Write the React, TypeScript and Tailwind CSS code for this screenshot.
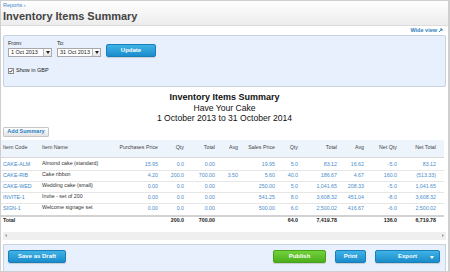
import React from 'react';

interface Row {
  code: string;
  name: string;
  vals: string[];
}

const rows: Row[] = [
  { code: 'CAKE-ALM', name: 'Almond cake (standard)', vals: ['15.95', '0.0', '0.00', '', '19.95', '5.0', '83.12', '16.62', '-5.0', '83.12'] },
  { code: 'CAKE-RIB', name: 'Cake ribbon', vals: ['4.20', '200.0', '700.00', '3.50', '5.60', '40.0', '186.67', '4.67', '160.0', '(513.33)'] },
  { code: 'CAKE-WED', name: 'Wedding cake (small)', vals: ['0.00', '0.0', '0.00', '', '250.00', '5.0', '1,041.65', '208.33', '-5.0', '1,041.65'] },
  { code: 'INVITE-1', name: 'Invite - set of 200', vals: ['0.00', '0.0', '0.00', '', '541.25', '8.0', '3,608.32', '451.04', '-8.0', '3,608.32'] },
  { code: 'SIGN-1', name: 'Welcome signage set', vals: ['0.00', '0.0', '0.00', '', '500.00', '6.0', '2,500.02', '416.67', '-6.0', '2,500.02'] },
];

const headers = ['Purchases Price', 'Qty', 'Total', 'Avg', 'Sales Price', 'Qty', 'Total', 'Avg', 'Net Qty', 'Net Total'];
const totals = ['', '200.0', '700.00', '', '', '64.0', '7,419.78', '', '136.0', '6,719.78'];

const cols = 'grid grid-cols-[41px_66px_50px_26px_31px_23px_37px_23px_39px_27px_33px_39px] pr-[7px]';

const Arrow = () => (
  <svg width="4" height="3" viewBox="0 0 4 3">
    <path d="M0 0h4L2 3z" fill="#222" />
  </svg>
);

const DateSelect = ({ value }: { value: string }) => (
  <div className="flex h-[9px] w-[44px] bg-white border border-[#a8a8a8]">
    <div className="flex-1 pl-[2px] text-[5.5px] leading-[7px] text-[#222]">{value}</div>
    <div className="w-[8px] border-l border-[#b8b8b8] bg-linear-to-b from-white to-[#e4e4e4] flex items-center justify-center">
      <Arrow />
    </div>
  </div>
);

const BlueButton = ({ label, w, caret }: { label: string; w: string; caret?: boolean }) => (
  <div className={`relative ${w} h-[13px] rounded-[2px] border border-[#1a7fb8] bg-linear-to-b from-[#3fb3e6] to-[#1a8ccb] flex items-center justify-center text-white font-bold text-[6px] shadow-[0_1px_1px_rgba(0,0,0,0.15)]`}>
    {label}
    {caret && (
      <svg className="absolute right-[5px] top-[5px]" width="4" height="3" viewBox="0 0 4 3">
        <path d="M0 0h4L2 3z" fill="#fff" />
      </svg>
    )}
  </div>
);

export default function App() {
  return (
    <div
      className="w-[450px] h-[272px] overflow-hidden bg-white border-l border-t border-b border-r-2 border-[#cfcfcf] flex flex-col"
      style={{ fontFamily: '"Liberation Sans", Arial, sans-serif' }}
    >
      {/* Page header */}
      <div className="h-[25px] shrink-0 px-[2px] pt-[1px] bg-linear-to-b from-white to-[#ececec] border-b border-[#dcdcdc]">
        <div className="text-[5.5px] leading-[7px] text-[#3a86c8]">Reports ›</div>
        <div className="mt-[1px] text-[11px] leading-[13px] font-bold text-[#444]">Inventory Items Summary</div>
      </div>

      <div className="h-[9px] shrink-0 flex justify-end items-center pr-[5px] text-[5.5px] font-bold text-[#2f7fc1] gap-[1px]">
        Wide view
        <svg width="5" height="5" viewBox="0 0 5 5">
          <path d="M1 4L4 1M2 1h2v2" stroke="#2f7fc1" strokeWidth="1" fill="none" />
        </svg>
      </div>

      {/* Filter panel */}
      <div className="h-[52px] shrink-0 ml-[2px] mr-[2px] rounded-[2px] border border-[#c9d3de] bg-[#e7f0fc] pl-[4px] pt-[4px]">
        <div className="flex items-end gap-[5px]">
          <div className="flex flex-col gap-[1px]">
            <span className="text-[5.5px] leading-[7px] text-[#222]">From:</span>
            <DateSelect value="1 Oct 2013" />
          </div>
          <div className="flex flex-col gap-[1px]">
            <span className="text-[5.5px] leading-[7px] text-[#222]">To:</span>
            <DateSelect value="31 Oct 2013" />
          </div>
          <BlueButton label="Update" w="w-[50px]" />
        </div>
        <div className="mt-[10px] flex items-center gap-[2px]">
          <div className="w-[6px] h-[6px] bg-white border border-[#8c8c8c] flex items-center justify-center">
            <svg width="4" height="4" viewBox="0 0 4 4">
              <path d="M0.5 2L1.6 3.2L3.6 0.6" stroke="#222" strokeWidth="0.9" fill="none" />
            </svg>
          </div>
          <span className="text-[5.5px] leading-[7px] text-[#222]">Show in GBP</span>
        </div>
      </div>

      {/* Report heading */}
      <div className="mt-[5px] shrink-0 flex flex-col items-center text-[#111] leading-[10.5px]">
        <div className="text-[9px] font-bold">Inventory Items Summary</div>
        <div className="text-[8.6px]">Have Your Cake</div>
        <div className="text-[8.6px]">1 October 2013 to 31 October 2014</div>
      </div>

      <div className="mt-[3px] ml-[2px] shrink-0 w-[46px] h-[10px] rounded-[1px] border border-[#c6c6c6] bg-linear-to-b from-white to-[#e3e3e3] flex items-center justify-center text-[5.5px] font-bold text-[#2a7cc2]">
        Add Summary
      </div>

      {/* Table */}
      <div className="mt-[3px] shrink-0 w-[443px] text-[5.3px]">
        <div className={`${cols} h-[18px] items-center bg-[#eef4fc] border-b border-[#d8d8d8] text-[#444]`}>
          <div className="pl-[2px]">Item Code</div>
          <div>Item Name</div>
          {headers.map((h, i) => (
            <div key={i} className="text-right">{h}</div>
          ))}
        </div>
        <div className="pt-[2px]">
          {rows.map((r, ri) => (
            <div key={r.code} className={`${cols} h-[11px] items-center ${ri < rows.length - 1 ? 'border-b border-[#e6e6e6]' : ''}`}>
              <div className="pl-[2px] text-[#3d86c6]">{r.code}</div>
              <div className="text-[#333] pb-[2px]">{r.name}</div>
              {r.vals.map((v, i) => (
                <div key={i} className="text-right text-[#4a8dca]">{v}</div>
              ))}
            </div>
          ))}
          <div className={`${cols} h-[10px] items-center border-t-2 border-[#d2d2d2] font-bold text-[#222]`}>
            <div className="pl-[2px]">Total</div>
            <div></div>
            {totals.map((v, i) => (
              <div key={i} className="text-right">{v}</div>
            ))}
          </div>
        </div>
      </div>

      {/* Horizontal scrollbar */}
      <div className="mt-[7px] ml-[2px] mr-[2px] shrink-0 h-[8px] bg-[#efefef] flex items-center justify-between px-[2px]">
        <svg width="2" height="3" viewBox="0 0 2 3">
          <path d="M2 0v3L0 1.5z" fill="#999" />
        </svg>
        <svg width="2" height="3" viewBox="0 0 2 3">
          <path d="M0 0v3L2 1.5z" fill="#999" />
        </svg>
      </div>

      {/* Bottom action bar */}
      <div className="mt-[4px] ml-[2px] mr-[2px] flex-1 border border-b-0 border-[#c9d3de] bg-[#e7f0fc] flex items-start pt-[5px] pl-[4px] pr-[5px]">
        <BlueButton label="Save as Draft" w="w-[58px]" />
        <div className="flex-1" />
        <div className="w-[53px] h-[13px] rounded-[2px] border border-[#48a21a] bg-linear-to-b from-[#72d23a] to-[#4cae1c] flex items-center justify-center text-white font-bold text-[6px] shadow-[0_1px_1px_rgba(0,0,0,0.15)]">
          Publish
        </div>
        <div className="w-[9px]" />
        <BlueButton label="Print" w="w-[31px]" />
        <div className="w-[9px]" />
        <BlueButton label="Export" w="w-[65px]" caret />
      </div>
    </div>
  );
}
